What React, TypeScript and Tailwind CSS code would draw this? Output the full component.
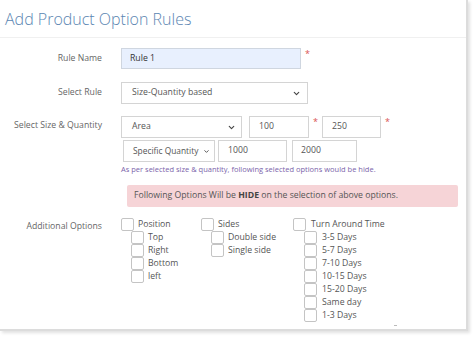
import { ChevronDown } from "lucide-react";

const font = { fontFamily: '"Open Sans", "Noto Sans", sans-serif' };

function Checkbox() {
    return <span className="inline-block h-[13px] w-[13px] shrink-0 rounded-[2px] border border-[#c4c4c4] bg-white" />;
}

function OptionGroup({ title, items, subIndent, labelGap }: { title: string; items: string[]; subIndent: string; labelGap: string }) {
    return (
        <div className="flex flex-col">
            <div className={`flex h-[13px] items-center ${labelGap}`}>
                <Checkbox />
                <span>{title}</span>
            </div>
            {items.map((item) => (
                <div key={item} className={`flex h-[13px] items-center ${labelGap} ${subIndent}`}>
                    <Checkbox />
                    <span>{item}</span>
                </div>
            ))}
        </div>
    );
}

function SelectBox({ value, className }: { value: string; className: string }) {
    return (
        <div className={`flex items-center justify-between whitespace-nowrap border border-[#d4d4d4] bg-white text-[#555] ${className}`}>
            <span>{value}</span>
            <ChevronDown className="h-[9px] w-[9px] shrink-0 text-[#444]" strokeWidth={3} />
        </div>
    );
}

function Required() {
    return <span className="ml-[4px] self-start pt-[1px] text-[9px] leading-none text-[#d9534f]">*</span>;
}

export default function App() {
    return (
        <div className="h-[337px] w-[474px] bg-white text-[8.7px] text-[#555]" style={font}>
            <div className="relative h-[331px] w-[468px] border-r-[2px] border-b-[2px] border-[#dcdcdc] shadow-[2px_2px_3px_rgba(0,0,0,0.12)]">
                {/* Header */}
                <div className="flex h-[38px] items-center border-b border-[#f0f0f0] pl-[5px]">
                    <h1 className="text-[16px] font-light leading-none text-[#5b86b2]">Add Product Option Rules</h1>
                </div>

                {/* Rule Name */}
                <div className="mt-[10px] flex items-center">
                    <div className="w-[102px] text-right text-[#666]">Rule Name</div>
                    <div className="ml-[19px] flex">
                        <div className="flex h-[21px] w-[180px] items-center border border-[#cfd6e0] bg-[#e8f0fe] pl-[8px] text-[#333]">Rule 1</div>
                        <Required />
                    </div>
                </div>

                {/* Select Rule */}
                <div className="mt-[13px] flex items-center">
                    <div className="w-[102px] text-right text-[#666]">Select Rule</div>
                    <SelectBox value="Size-Quantity based" className="ml-[19px] h-[22px] w-[187px] pr-[6px] pl-[10px]" />
                </div>

                {/* Select Size & Quantity */}
                <div className="mt-[12px] flex">
                    <div className="w-[102px] pt-[3px] text-right text-[#666]">Select Size &amp; Quantity</div>
                    <div className="ml-[19px] flex flex-col">
                        <div className="flex items-start">
                            <SelectBox value="Area" className="h-[22px] w-[121px] pr-[5px] pl-[10px]" />
                            <div className="ml-[7px] flex h-[22px] w-[60px] items-center border border-[#d4d4d4] pl-[9px]">100</div>
                            <Required />
                            <div className="ml-[4px] flex h-[22px] w-[59px] items-center border border-[#d4d4d4] pl-[9px]">250</div>
                            <Required />
                        </div>
                        <div className="mt-[2px] ml-[2px] flex">
                            <div className="flex h-[22px] w-[92px] items-center justify-between whitespace-nowrap border border-[#d4d4d4] pr-[4px] pl-[9px] text-[8.4px]">
                                <span>Specific Quantity</span>
                                <ChevronDown className="h-[7px] w-[7px] shrink-0 text-[#444]" strokeWidth={3} />
                            </div>
                            <div className="ml-[3px] flex h-[22px] w-[69px] items-center border border-[#d4d4d4] pl-[9px]">1000</div>
                            <div className="ml-[5px] flex h-[22px] w-[65px] items-center border border-[#d4d4d4] pl-[8px]">2000</div>
                        </div>
                        <div className="mt-[2px] whitespace-nowrap text-[7.5px] leading-[10px] text-[#7b64aa]">
                            As per selected size &amp; quantity, following selected options would be hide.
                        </div>
                    </div>
                </div>

                {/* Alert */}
                <div className="mt-[11px] ml-[127px] flex h-[22px] w-[331px] items-center rounded-[2px] bg-[#f6d4d7] pl-[7px] text-[#555]">
                    <span>
                        Following Options Will be <b className="font-bold text-[#444]">HIDE</b> on the selection of above options.
                    </span>
                </div>

                {/* Additional Options */}
                <div className="mt-[11px] flex">
                    <div className="w-[102px] pt-[2px] text-right text-[#666]">Additional Options</div>
                    <div className="ml-[19px] flex">
                        <div className="w-[80px]">
                            <OptionGroup title="Position" items={["Top", "Right", "Bottom", "left"]} subIndent="pl-[10px]" labelGap="gap-[4px]" />
                        </div>
                        <div className="w-[92px]">
                            <OptionGroup title="Sides" items={["Double side", "Single side"]} subIndent="pl-[10px]" labelGap="gap-[4px]" />
                        </div>
                        <OptionGroup
                            title="Turn Around Time"
                            items={["3-5 Days", "5-7 Days", "7-10 Days", "10-15 Days", "15-20 Days", "Same day", "1-3 Days"]}
                            subIndent="pl-[11px]"
                            labelGap="gap-[5px]"
                        />
                    </div>
                </div>

                <span className="absolute top-[325px] left-[394px] h-[1px] w-[3px] bg-[#bbb]" />
            </div>
        </div>
    );
}
